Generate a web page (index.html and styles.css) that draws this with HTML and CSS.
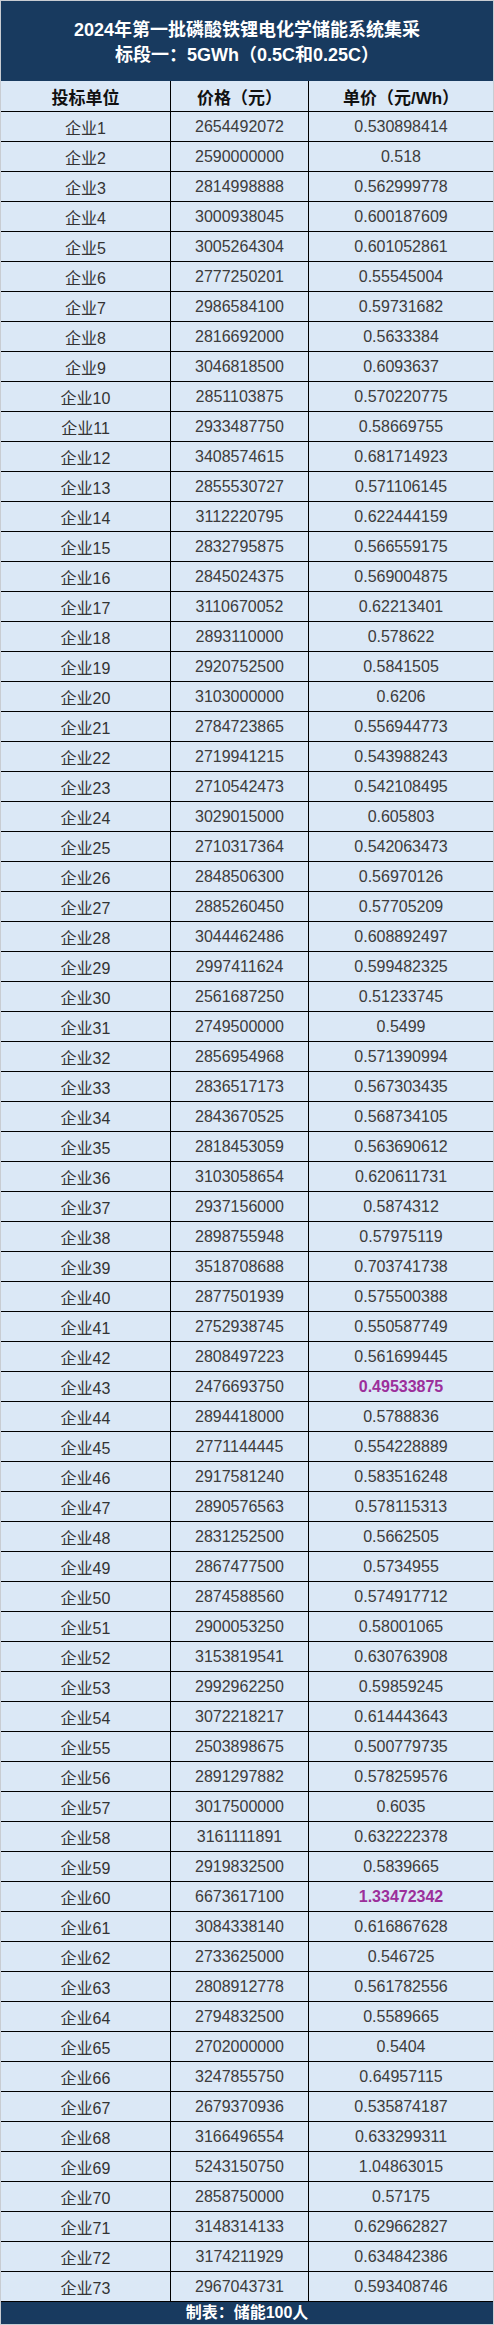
FILE: index.html
```html
<!DOCTYPE html>
<html lang="zh-CN">
<head>
<meta charset="utf-8">
<title>2024年第一批磷酸铁锂电化学储能系统集采</title>
<link rel="stylesheet" href="styles.css">
</head>
<body>
<div class="sheet">
  <div class="title">
    <div>2024年第一批磷酸铁锂电化学储能系统集采</div>
    <div>标段一：5GWh（0.5C和0.25C）</div>
  </div>
  <div class="row head"><div class="cell">投标单位</div><div class="cell">价格（元）</div><div class="cell">单价（元/Wh）</div></div>
  <div id="body"></div>
  <div class="footer">制表：储能100人</div>
</div>
<script src="script.js"></script>
</body>
</html>
```

FILE: script.js
```js
var data = [
["2654492072","0.530898414"],["2590000000","0.518"],["2814998888","0.562999778"],["3000938045","0.600187609"],
["3005264304","0.601052861"],["2777250201","0.55545004"],["2986584100","0.59731682"],["2816692000","0.5633384"],
["3046818500","0.6093637"],["2851103875","0.570220775"],["2933487750","0.58669755"],["3408574615","0.681714923"],
["2855530727","0.571106145"],["3112220795","0.622444159"],["2832795875","0.566559175"],["2845024375","0.569004875"],
["3110670052","0.62213401"],["2893110000","0.578622"],["2920752500","0.5841505"],["3103000000","0.6206"],
["2784723865","0.556944773"],["2719941215","0.543988243"],["2710542473","0.542108495"],["3029015000","0.605803"],
["2710317364","0.542063473"],["2848506300","0.56970126"],["2885260450","0.57705209"],["3044462486","0.608892497"],
["2997411624","0.599482325"],["2561687250","0.51233745"],["2749500000","0.5499"],["2856954968","0.571390994"],
["2836517173","0.567303435"],["2843670525","0.568734105"],["2818453059","0.563690612"],["3103058654","0.620611731"],
["2937156000","0.5874312"],["2898755948","0.57975119"],["3518708688","0.703741738"],["2877501939","0.575500388"],
["2752938745","0.550587749"],["2808497223","0.561699445"],["2476693750","0.49533875",1],["2894418000","0.5788836"],
["2771144445","0.554228889"],["2917581240","0.583516248"],["2890576563","0.578115313"],["2831252500","0.5662505"],
["2867477500","0.5734955"],["2874588560","0.574917712"],["2900053250","0.58001065"],["3153819541","0.630763908"],
["2992962250","0.59859245"],["3072218217","0.614443643"],["2503898675","0.500779735"],["2891297882","0.578259576"],
["3017500000","0.6035"],["3161111891","0.632222378"],["2919832500","0.5839665"],["6673617100","1.33472342",1],
["3084338140","0.616867628"],["2733625000","0.546725"],["2808912778","0.561782556"],["2794832500","0.5589665"],
["2702000000","0.5404"],["3247855750","0.64957115"],["2679370936","0.535874187"],["3166496554","0.633299311"],
["5243150750","1.04863015"],["2858750000","0.57175"],["3148314133","0.629662827"],["3174211929","0.634842386"],
["2967043731","0.593408746"]
];
var body = document.getElementById("body");
var html = "";
for (var i = 0; i < data.length; i++) {
  var d = data[i];
  html += '<div class="row"><div class="cell">企业' + (i + 1) + '</div><div class="cell num">' + d[0] +
    '</div><div class="cell num' + (d[2] ? ' hl' : '') + '">' + d[1] + '</div></div>';
}
body.innerHTML = html;
```

FILE: styles.css
```css
html, body {
  margin: 0;
  padding: 0;
  background: #ffffff;
}
.sheet {
  width: 494px;
  box-sizing: border-box;
  border: 1px solid #c8ccd2;
  font-family: "Liberation Sans", "Noto Sans CJK SC", sans-serif;
  background: #dbe8f6;
}
.title {
  height: 80px;
  box-sizing: border-box;
  padding-top: 3px;
  background: #183a5f;
  color: #ffffff;
  font-weight: bold;
  font-size: 18px;
  line-height: 25px;
  display: flex;
  flex-direction: column;
  justify-content: center;
  align-items: center;
}
.row {
  display: grid;
  grid-template-columns: 169px 138px 1fr;
  height: 30px;
  box-sizing: border-box;
  border-bottom: 1px solid #000000;
  background: #dbe8f6;
}
.row.head {
  height: 31px;
}
.cell {
  display: flex;
  align-items: center;
  justify-content: center;
  font-size: 16px;
  color: #333333;
  white-space: nowrap;
}
.cell + .cell {
  border-left: 1px solid #000000;
}
.num {
  color: #3c3c3c;
}
.head .cell {
  font-size: 17px;
  font-weight: bold;
  color: #111111;
}
.hl {
  color: #9b2f9b;
  font-weight: bold;
}
.footer {
  height: 22px;
  background: #183a5f;
  color: #ffffff;
  font-weight: bold;
  font-size: 16px;
  line-height: 22px;
  text-align: center;
}
```
